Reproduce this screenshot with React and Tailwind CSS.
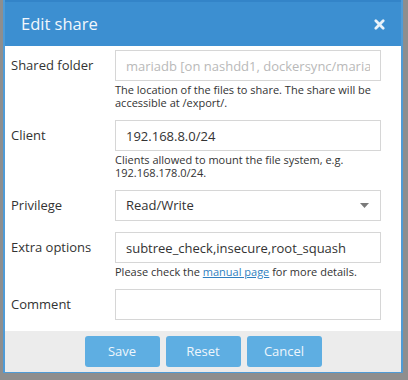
import { useState } from "react";

function Field({ label, children, help }) {
  return (
    <div className="grid grid-cols-[104px_1fr] mb-[11px]">
      <label className="h-[31px] flex items-center text-[13px] text-[#333]">{label}</label>
      <div>
        {children}
        {help && <p className="mt-[2px] text-[11px] leading-[13px] text-[#333]">{help}</p>}
      </div>
    </div>
  );
}

const inputCls =
  "w-full h-[31px] border border-[#d6d6d6] bg-white px-[10px] text-[13px] text-[#333] outline-none";

export default function App() {
  const [client, setClient] = useState("192.168.8.0/24");
  const [options, setOptions] = useState("subtree_check,insecure,root_squash");
  const [comment, setComment] = useState("");
  const [privilege, setPrivilege] = useState("Read/Write");

  return (
    <div className="w-[408px] h-[380px] bg-[#8e8e8e] pl-[3px]" style={{ fontFamily: '"Open Sans", "Liberation Sans", sans-serif' }}>
      <div className="w-[400px] h-[373px] flex flex-col border-2 border-t-0 border-[#4f9bd6] bg-white">
        <div className="h-[46px] shrink-0 bg-[#3c8fd1] border-t-2 border-[#3384c8] flex items-center justify-between pl-[16px] pr-[15px]">
          <h2 className="text-[16.5px] text-[#f2f7fc]">Edit share</h2>
          <button className="w-[13px] h-[13px] flex items-center justify-center">
            <svg width="11" height="11" viewBox="0 0 12 12">
              <path d="M2 2 L10 10 M10 2 L2 10" stroke="#e9f2fa" strokeWidth="3" strokeLinecap="round" />
            </svg>
          </button>
        </div>

        <div className="flex-1 pt-[4px] pl-[6px] pr-[20px]">
          <Field
            label="Shared folder"
            help="The location of the files to share. The share will be accessible at /export/."
          >
            <input className={inputCls + " text-[#b9b9b9]"} value="mariadb [on nashdd1, dockersync/mariadb]" readOnly />
          </Field>
          <Field label="Client" help="Clients allowed to mount the file system, e.g. 192.168.178.0/24.">
            <input className={inputCls} value={client} onChange={(e) => setClient(e.target.value)} />
          </Field>
          <Field label="Privilege">
            <div className="relative">
              <select
                className={inputCls + " appearance-none"}
                value={privilege}
                onChange={(e) => setPrivilege(e.target.value)}
              >
                <option>Read/Write</option>
                <option>Read only</option>
              </select>
              <svg className="absolute right-[12px] top-[13px] pointer-events-none" width="9" height="5" viewBox="0 0 9 5">
                <path d="M0 0 H9 L4.5 5 Z" fill="#7a7a7a" />
              </svg>
            </div>
          </Field>
          <Field
            label="Extra options"
            help={
              <>
                Please check the{" "}
                <a href="#" className="text-[#2f7fc0] underline">
                  manual page
                </a>{" "}
                for more details.
              </>
            }
          >
            <input className={inputCls} value={options} onChange={(e) => setOptions(e.target.value)} />
          </Field>
          <Field label="Comment">
            <input className={inputCls} value={comment} onChange={(e) => setComment(e.target.value)} />
          </Field>
        </div>

        <div className="h-[41px] shrink-0 bg-[#ececec] flex items-center justify-center gap-[6px]">
          <button className="w-[75px] h-[31px] rounded-[3px] bg-[#5eaee2] text-[13px] text-[#eef6fc]">Save</button>
          <button className="w-[75px] h-[31px] rounded-[3px] bg-[#5eaee2] text-[13px] text-[#eef6fc]">Reset</button>
          <button className="w-[75px] h-[31px] rounded-[3px] bg-[#5eaee2] text-[13px] text-[#eef6fc]">Cancel</button>
        </div>
      </div>
    </div>
  );
}
